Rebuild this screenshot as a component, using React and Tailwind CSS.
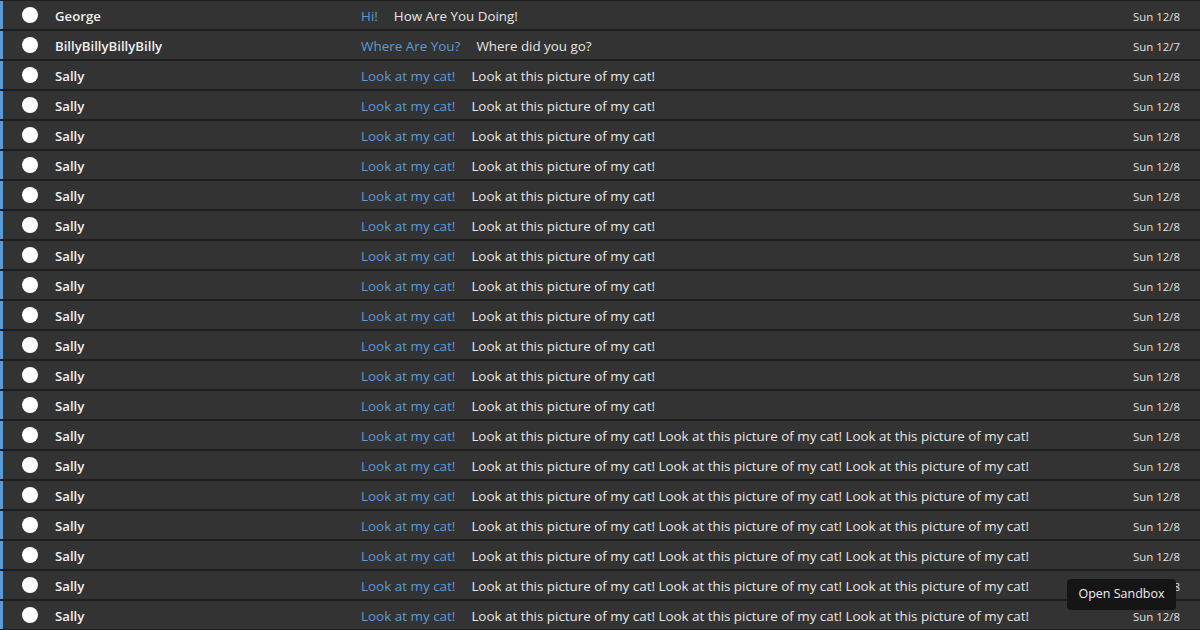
import React from "react";

const short = "Look at this picture of my cat!";
const long = "Look at this picture of my cat! Look at this picture of my cat! Look at this picture of my cat!";

const rows = [
  { name: "George", subject: "Hi!", body: "How Are You Doing!", date: "Sun 12/8" },
  { name: "BillyBillyBillyBilly", subject: "Where Are You?", body: "Where did you go?", date: "Sun 12/7" },
  ...Array.from({ length: 12 }, () => ({ name: "Sally", subject: "Look at my cat!", body: short, date: "Sun 12/8" })),
  ...Array.from({ length: 7 }, () => ({ name: "Sally", subject: "Look at my cat!", body: long, date: "Sun 12/8" })),
];

export default function App() {
  return (
    <div
      className="relative w-[1200px] h-[630px] overflow-hidden bg-[#1e1e1e] pt-px flex flex-col gap-[2px]"
      style={{ fontFamily: '"Open Sans", "Noto Sans", sans-serif' }}
    >
      {rows.map((r, i) => (
        <div key={i} className="flex items-center h-[28px] shrink-0 bg-[#333333] border-l-[3px] border-[#5b9bd5]">
          <div className="w-[52px] shrink-0 flex justify-center pl-[1px]">
            <div className="w-4 h-4 rounded-full bg-white" />
          </div>
          <div className="w-[306px] shrink-0 mt-[3px] font-semibold text-[13.2px] text-[#f0f0f0]">{r.name}</div>
          <div className="flex-1 flex gap-4 min-w-0 mt-[3px] whitespace-nowrap">
            <span className="text-[#5b9bd5] text-[13.45px]">{r.subject}</span>
            <span className="text-[#e6e6e6] text-[13.38px]">{r.body}</span>
          </div>
          <div className="pr-[20px] mt-[3px] text-[11.4px] text-[#e0e0e0] whitespace-nowrap">{r.date}</div>
        </div>
      ))}
      <div className="absolute left-[1067px] top-[579px] w-[109px] h-[31px] rounded bg-[#151515] text-[#f0f0f0] text-[12.5px] flex items-center justify-center">
        Open Sandbox
      </div>
    </div>
  );
}
